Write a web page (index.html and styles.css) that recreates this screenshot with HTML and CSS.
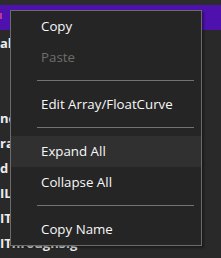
FILE: index.html
```html
<!DOCTYPE html>
<html>
<head>
    <meta charset="utf-8">
    <title>Context menu</title>
    <link rel="stylesheet" href="styles.css">
</head>
<body>
    <div class="top-strip"></div>
    <div class="band"><span class="band-mark"></span></div>
    <div class="rows">
        <div class="row">al</div>
        <div class="row"></div>
        <div class="row"></div>
        <div class="row">nc</div>
        <div class="row">ra</div>
        <div class="row">d</div>
        <div class="row">IL</div>
        <div class="row">IT</div>
        <div class="row">IThroughSig</div>
    </div>

    <div class="menu">
        <div class="menu-item">Copy</div>
        <div class="menu-item disabled">Paste</div>
        <div class="menu-sep"></div>
        <div class="menu-item">Edit Array/FloatCurve</div>
        <div class="menu-sep"></div>
        <div class="menu-item hover">Expand All</div>
        <div class="menu-item">Collapse All</div>
        <div class="menu-sep"></div>
        <div class="menu-item">Copy Name</div>
    </div>
</body>
</html>
```

FILE: styles.css
```css
html {
    height: 100%;
}

body {
    height: 100%;
    margin: 0;
    padding: 0;
    overflow: hidden;
    background: #292929;
    font-family: 'Open Sans', sans-serif;
    font-size: 13px;
    color: #f2f2f2;
    position: relative;
}

.top-strip {
    height: 5px;
    background: #2c2c2c;
}

.band {
    height: 25px;
    background: #4e11ad;
    display: flex;
    align-items: center;
}

.band-mark {
    width: 2px;
    height: 6px;
    margin-top: -3px;
    background: #c2369a;
}

.rows {
    padding-top: 1px;
}

.row {
    height: 25px;
    line-height: 25px;
    font-weight: bold;
    white-space: nowrap;
    color: #ececec;
}

.menu {
    position: absolute;
    left: 10px;
    top: 10px;
    width: 190px;
    border: 1px solid #6b6b6b;
    background: #252525;
    box-shadow: 2px 2px 2px rgba(0, 0, 0, 0.35);
}

.menu-item {
    height: 31px;
    line-height: 31px;
    padding-left: 30px;
    font-size: 13.3px;
    color: #f8f8f8;
    white-space: nowrap;
}

.menu-item.disabled {
    color: #6e6e6e;
}

.menu-item.hover {
    background: #303030;
}

.menu-sep {
    height: 1px;
    margin: 7px 7px 8px 26px;
    background: #737373;
}
```
